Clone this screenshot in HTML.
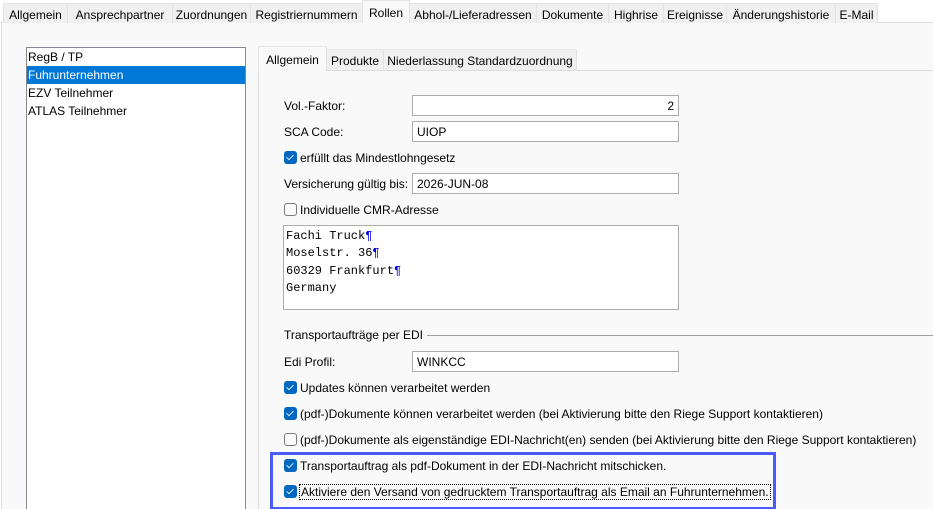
<!DOCTYPE html>
<html><head><meta charset="utf-8"><style>
*{box-sizing:border-box;margin:0;padding:0}
html{width:933px;height:509px;overflow:hidden}
body{width:933px;height:509px;background:#fff;font:12px "Liberation Sans",sans-serif;color:#000;position:relative;overflow:hidden}
.a{position:absolute;white-space:nowrap}
.tab{position:absolute;top:3px;height:20px;background:#f0f0f0;border:1px solid #e3e3e3;border-bottom:none;padding:4px 0 0;text-align:center}
.panel{position:absolute;left:1px;top:22px;width:940px;height:487px;background:#f9f9f9;border:1px solid #dcdcdc;border-bottom:none}
.itab{position:absolute;top:49px;height:21px;background:#f0f0f0;border:1px solid #e3e3e3;border-bottom:none;padding:4px 0 0;text-align:center}
.inp{position:absolute;height:21px;background:#fff;border:1px solid #acacac;padding:3px 4px}
.cb{position:absolute;width:13px;height:13px;border-radius:3px;background:#0067c0;left:284px}
.cb::after{content:"";position:absolute;left:4px;top:2px;width:3px;height:6px;border:solid #cfe3f7;border-width:0 1px 1px 0;transform:rotate(45deg)}
.cb.off{background:#fbfbfb;border:1px solid #7a7a7a}
.cb.off::after{display:none}
.lbl{position:absolute;left:300px}
.mono{font-family:"Liberation Mono",monospace;font-size:12px}
.p{color:#0000e0}
</style></head><body>
<div class="panel"></div>
<div class="tab" style="left:3px;width:65px">Allgemein</div>
<div class="tab" style="left:67px;width:106px">Ansprechpartner</div>
<div class="tab" style="left:172px;width:79px">Zuordnungen</div>
<div class="tab" style="left:250px;width:113px">Registriernummern</div>
<div class="tab" style="left:362px;top:0;height:23px;width:48px;background:#f9f9f9;padding-top:5px">Rollen</div>
<div class="tab" style="left:409px;width:128px">Abhol-/Lieferadressen</div>
<div class="tab" style="left:536px;width:73px">Dokumente</div>
<div class="tab" style="left:608px;width:56px">Highrise</div>
<div class="tab" style="left:663px;width:64px">Ereignisse</div>
<div class="tab" style="left:726px;width:110px">Änderungshistorie</div>
<div class="tab" style="left:835px;width:43px">E-Mail</div>

<div class="a" style="left:26px;top:47px;width:220px;height:462px;background:#fff;border:1px solid #828790;border-bottom:none"></div>
<div class="a" style="left:28px;top:50px">RegB / TP</div>
<div class="a" style="left:27px;top:66px;width:218px;height:18px;background:#0078d7;color:#fff;padding:2px 1px">Fuhrunternehmen</div>
<div class="a" style="left:28px;top:86px">EZV Teilnehmer</div>
<div class="a" style="left:28px;top:104px">ATLAS Teilnehmer</div>

<div class="a" style="left:258px;top:70px;width:680px;height:439px;border:1px solid #dcdcdc;border-bottom:none;background:#f9f9f9"></div>
<div class="itab" style="left:258px;top:46px;height:25px;width:69px;background:#f9f9f9;padding-top:6px">Allgemein</div>
<div class="itab" style="left:326px;width:58px">Produkte</div>
<div class="itab" style="left:383px;width:194px">Niederlassung Standardzuordnung</div>

<div class="a" style="left:284px;top:99px">Vol.-Faktor:</div>
<div class="inp" style="left:412px;top:95px;width:267px;text-align:right">2</div>
<div class="a" style="left:284px;top:125px">SCA Code:</div>
<div class="inp" style="left:412px;top:121px;width:267px">UIOP</div>
<div class="cb" style="top:151px"></div><div class="lbl" style="top:151px">erfüllt das Mindestlohngesetz</div>
<div class="a" style="left:284px;top:177px">Versicherung gültig bis:</div>
<div class="inp" style="left:412px;top:173px;width:267px">2026-JUN-08</div>
<div class="cb off" style="top:203px"></div><div class="lbl" style="top:203px">Individuelle CMR-Adresse</div>
<div class="a" style="left:283px;top:225px;width:396px;height:85px;background:#fff;border:1px solid #acacac"></div>
<div class="a mono" style="left:286px;top:228px;line-height:17.3px">Fachi Truck<span class="p">¶</span><br>Moselstr. 36<span class="p">¶</span><br>60329 Frankfurt<span class="p">¶</span><br>Germany</div>
<div class="a" style="left:284px;top:328px">Transportaufträge per EDI</div>
<div class="a" style="left:427px;top:335px;width:520px;height:1px;background:#a0a0a0"></div>
<div class="a" style="left:284px;top:355px">Edi Profil:</div>
<div class="inp" style="left:412px;top:351px;width:267px">WINKCC</div>
<div class="cb" style="top:381px"></div><div class="lbl" style="top:381px">Updates können verarbeitet werden</div>
<div class="cb" style="top:407px"></div><div class="lbl" style="top:407px">(pdf-)Dokumente können verarbeitet werden (bei Aktivierung bitte den Riege Support kontaktieren)</div>
<div class="cb off" style="top:433px"></div><div class="lbl" style="top:433px">(pdf-)Dokumente als eigenständige EDI-Nachricht(en) senden (bei Aktivierung bitte den Riege Support kontaktieren)</div>
<div class="cb" style="top:459px"></div><div class="lbl" style="top:459px">Transportauftrag als pdf-Dokument in der EDI-Nachricht mitschicken.</div>
<div class="cb" style="top:485px"></div><div class="lbl" style="top:484px;border:1px dotted #000;padding:0 1px;left:299px">Aktiviere den Versand von gedrucktem Transportauftrag als Email an Fuhrunternehmen.</div>
<div class="a" style="left:270px;top:452px;width:506px;height:58px;border:3px solid #4a5cf7"></div>
</body></html>
